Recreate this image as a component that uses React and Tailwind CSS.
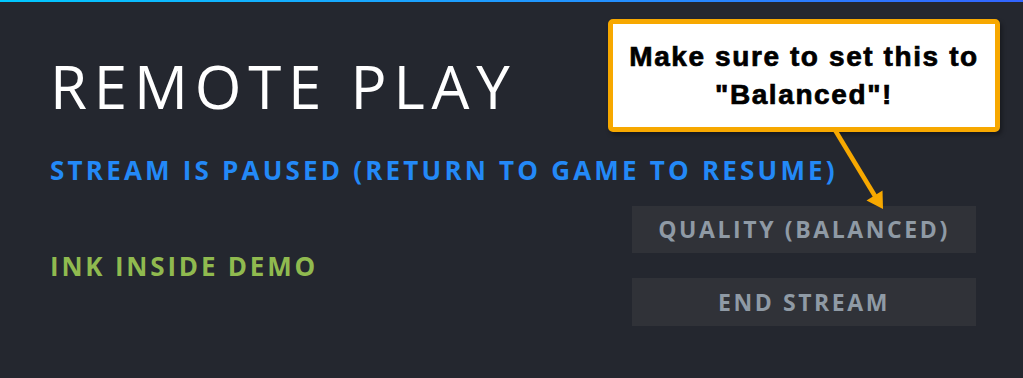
import React from "react";

export default function App() {
  return (
    <div className="relative w-[1023px] h-[378px] overflow-hidden bg-[#24272f]">
      <div className="h-[2px] bg-gradient-to-r from-[#00c8ff] to-[#3264ff]" />
      <div className="flex flex-col pl-[50px] pr-[47px] font-['Open_Sans',sans-serif]">
        <h1 className="mt-[54px] text-[60px] leading-none font-normal tracking-[6.8px] text-white">
          REMOTE PLAY
        </h1>
        <div className="mt-[41px] text-[26px] leading-none font-bold tracking-[3.2px] text-[#2389f7]">
          STREAM IS PAUSED (RETURN TO GAME TO RESUME)
        </div>
        <div className="mt-[23px] flex items-center justify-between">
          <div className="text-[26px] leading-none font-bold tracking-[2.8px] text-[#90ba4f]">
            INK INSIDE DEMO
          </div>
          <div className="flex flex-col gap-[25px]">
            <button className="w-[344px] h-[47px] bg-[#303238] text-[#8f9aa5] text-[23px] font-bold tracking-[2.6px]">
              QUALITY (BALANCED)
            </button>
            <button className="w-[344px] h-[48px] bg-[#303238] text-[#8f9aa5] text-[23px] font-bold tracking-[2.6px]">
              END STREAM
            </button>
          </div>
        </div>
      </div>

      <div className="absolute left-[608px] top-[19px] w-[392px] h-[113px] rounded-[5px] border-[5px] border-[#f7a800] bg-white shadow-[2px_3px_4px_rgba(0,0,0,0.35)] flex items-center justify-center text-center">
        <p className="font-['Liberation_Sans',Arial,sans-serif] font-bold text-black text-[28px] leading-[38px] tracking-[1.6px] [-webkit-text-stroke:0.7px_black]">
          Make sure to set this to
          <br />
          "Balanced"!
        </p>
      </div>

      <svg className="absolute left-[820px] top-[120px]" width="80" height="100" viewBox="0 0 80 100">
        <line x1="15" y1="10" x2="55" y2="76" stroke="#f7a800" strokeWidth="4.5" />
        <polygon points="63,89 46.5,80.5 62.5,70.5" fill="#f7a800" />
      </svg>
    </div>
  );
}
